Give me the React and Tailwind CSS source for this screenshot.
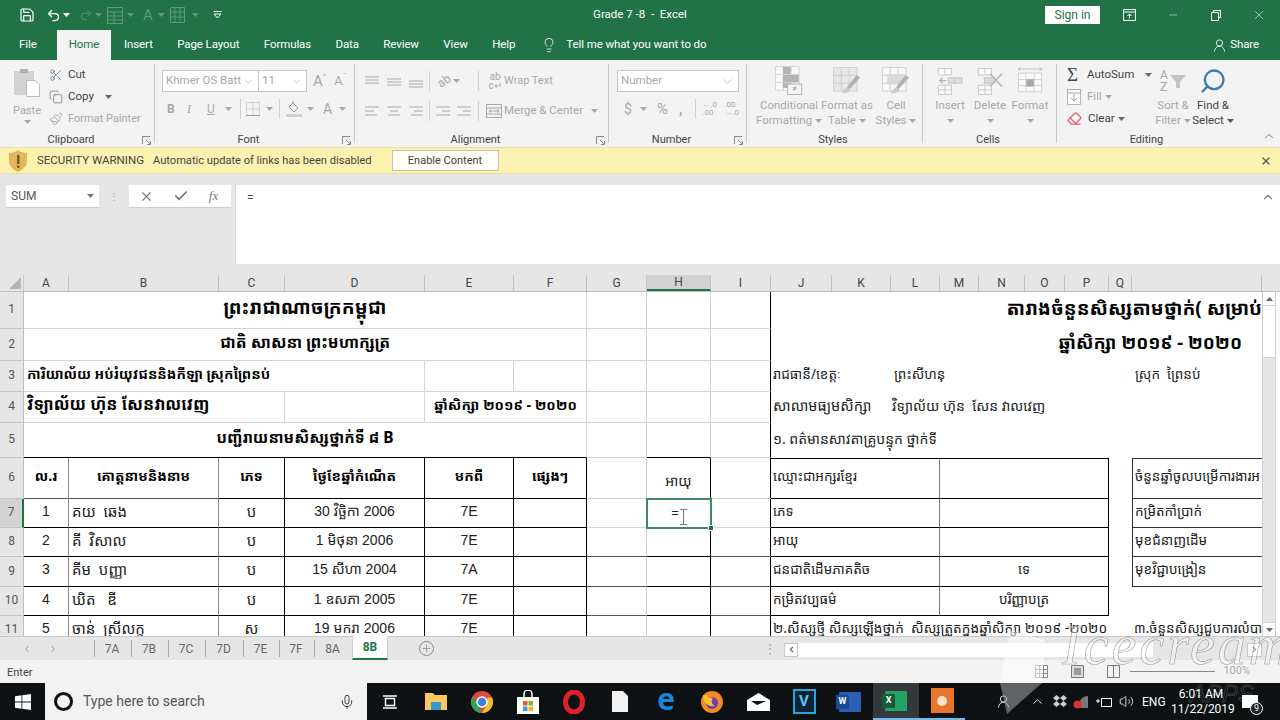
import {
  Save, Undo2, Redo2, Scissors, Copy, Paintbrush, Lightbulb, UserRound, X, Check, Minus, Search,
  Mic, Volume2, ChevronUp, ChevronDown, ChevronLeft, ChevronRight, Plus, Eraser,
} from 'lucide-react'

const uiFont = "font-['Roboto','Open_Sans',sans-serif]"
const khmer = "font-['Noto_Sans_Khmer','Khmer_OS_Battambang','Noto_Sans','Liberation_Sans',sans-serif]"

function Caret({ className = 'text-[#a8a8a8]' }) {
  return (
    <svg width="7" height="4" viewBox="0 0 7 4" className={`shrink-0 ${className}`}>
      <path d="M0 0h7L3.500 4z" fill="currentColor" />
    </svg>
  )
}

// three short lines, used for all the alignment buttons
function Lines({ ys = [2, 6, 10], xs = [[1, 15], [1, 15], [1, 15]] }) {
  return (
    <svg width="16" height="13" viewBox="0 0 16 13" className="text-[#a8a8a8] shrink-0">
      {ys.map((y, i) => (
        <path key={i} d={`M${xs[i][0]} ${y}H${xs[i][1]}`} stroke="currentColor" strokeWidth="1" />
      ))}
    </svg>
  )
}

function Launcher() {
  return (
    <svg width="9" height="9" viewBox="0 0 9 9" className="text-[#8a8a8a] shrink-0">
      <path d="M.5 8V.5H8M8.500 8.500 4 4M8.500 5v3.500H5" fill="none" stroke="currentColor" />
    </svg>
  )
}

function Group({ width, label, launcher, children, last }) {
  return (
    <div className={`${width} h-full flex flex-col shrink-0 pt-[2px] ${last ? '' : 'border-r border-[#c8c8c8]'}`}>
      <div className="flex-1 min-h-0 flex">{children}</div>
      <div className="h-[17px] -mb-[6px] flex items-center pr-[3px]">
        <div className="flex-1 text-center text-[11px] text-[#444]">{label}</div>
        {launcher ? <Launcher /> : null}
      </div>
    </div>
  )
}

function BigButton({ icon, lines, width }) {
  return (
    <div className={`${width} flex flex-col items-center shrink-0 text-[11.5px] leading-[15px] text-[#a8a8a8] text-center`}>
      <div className="h-[30px] flex items-center justify-center opacity-75">{icon}</div>
      <div className="mt-[2px]">{lines[0]}</div>
      <div className="flex items-center gap-[3px] whitespace-nowrap h-[15px]">
        {lines[1]} <Caret />
      </div>
    </div>
  )
}

const gridLines = 'M.5.5h27v27H.5zM.5 9.500h27M.5 18.500h27M9.500.5v27M18.500.5v27'

function CondIcon() {
  return (
    <svg width="28" height="30" viewBox="0 0 32 34">
      <path d={gridLines} fill="#fff" stroke="#c0c0c0" />
      <path d="M9 1h9v8H9zM9 10h18v8H9zM9 19h9v6H9z" fill="#a0a0a0" />
      <rect x="14.500" y="20.500" width="16" height="12" fill="#f5f5f5" stroke="#999" />
      <text x="22.500" y="30" fontSize="10" textAnchor="middle" fill="#666">≠</text>
    </svg>
  )
}

function TableIcon({ shade }) {
  return (
    <svg width="28" height="28" viewBox="0 0 32 32">
      <path d={gridLines} fill={shade ? '#fafafa' : '#e4e4e4'} stroke="#c0c0c0" />
      {shade ? <path d="M6 8h19v12H6z" fill="#d0d0d0" /> : null}
      <path d="M31 12 19 25l-3-2 11-14z" fill="#9a9a9a" />
      <path d="M17 23c-3 1-5 3-7 7 5 0 9-1 10-4z" fill="#bdbdbd" />
    </svg>
  )
}

function CellsIcon({ kind }) {
  if (kind === 'format') {
    return (
      <svg width="26" height="30" viewBox="0 0 28 32">
        <path d="M1 3h26M1 3l3-2M1 3l3 2M27 3l-3-2M27 3l-3 2" stroke="#aaa" fill="none" />
        <path d="M1.500 7.500h25v20h-25zM1.500 14.500h25M1.500 21h25M9.500 7.500v20M18.500 7.500v20" fill="#fff" stroke="#c0c0c0" />
        <path d="M10 14h8v8h-8z" fill="#8f8f8f" />
      </svg>
    )
  }
  return (
    <svg width="26" height="30" viewBox="0 0 28 32">
      <path d="M1.500 2.500h14v7h-14zM8.500 2.500v7M1.500 20.500h14v10h-14zM1.500 25.500h14M8.500 20.500v10" fill="#fff" stroke="#b5b5b5" />
      {kind === 'insert' ? (
        <>
          <path d="M12 12.500h15v6H12zM19 12.500v6" fill="#d8d8d8" stroke="#b5b5b5" />
          <path d="M10 15.500H3M6 12.500l-3 3 3 3" stroke="#999" strokeWidth="1.400" fill="none" />
        </>
      ) : (
        <>
          <path d="M8 12.500h11v6H8z" fill="#cfcfcf" stroke="#b5b5b5" />
          <path d="m14 8 13 14M27 8 14 22" stroke="#a8a8a8" strokeWidth="1.800" />
        </>
      )}
    </svg>
  )
}

function Ribbon() {
  return (
    <div className={`h-[87px] bg-[#f3f3f3] flex py-[4px] shrink-0 ${uiFont}`}>
      <Group width="w-[155px]" label="Clipboard" launcher>
        <div className="w-[46px] flex flex-col items-center text-[11px] text-[#a8a8a8] pl-[8px]">
          <svg width="28" height="32" viewBox="0 0 28 32">
            <path d="M1 5h20v24H1z" fill="#d2d2d2" />
            <path d="M7 3h8v4H7z" fill="#b0b0b0" />
            <path d="M13.500 14.500h9l4 4v12h-13z" fill="#fff" stroke="#bbb" />
          </svg>
          <div className="mt-[5px]">Paste</div>
          <Caret />
        </div>
        <div className="flex flex-col gap-[5px] pl-[3px] text-[11.5px] text-[#444] leading-[17px]">
          <div className="flex items-center gap-[5px]">
            <Scissors size={14} strokeWidth={1.300} className="text-[#4a6f9d]" /> Cut
          </div>
          <div className="flex items-center gap-[5px]">
            <Copy size={14} strokeWidth={1.200} className="text-[#666]" /> Copy
            <Caret className="text-[#666] ml-[6px]" />
          </div>
          <div className="flex items-center gap-[5px] text-[#a8a8a8]">
            <Paintbrush size={14} strokeWidth={1.600} /> <span className="text-[11px]">Format Painter</span>
          </div>
        </div>
      </Group>

      <Group width="w-[200px]" label="Font" launcher>
        <div className="pl-[7px] flex flex-col gap-[6px] text-[#a8a8a8] pt-[4px]">
          <div className="flex items-center h-[22px] text-[11.5px]">
            <div className="w-[97px] h-full bg-white border border-[#c6c6c6] flex items-center justify-between px-[3px]">
              Khmer OS Batt <ChevronDown size={13} strokeWidth={1} />
            </div>
            <div className="w-[48px] h-full bg-white border-y border-r border-[#c6c6c6] flex items-center justify-between px-[3px]">
              11 <ChevronDown size={13} strokeWidth={1} />
            </div>
            <span className="ml-[6px] text-[15px]">A</span>
            <span className="text-[8px] -mt-[9px]">^</span>
            <span className="ml-[8px] text-[13px]">A</span>
            <span className="text-[8px] -mt-[9px]">ˇ</span>
          </div>
          <div className="flex items-center h-[22px] pl-[5px]">
            <span className="w-[20px] text-[12px] font-bold">B</span>
            <span className="w-[20px] text-[12px] italic font-serif">I</span>
            <span className="w-[18px] text-[12px] underline">U</span>
            <Caret />
            <div className="w-px h-[20px] bg-[#d0d0d0] ml-[8px] mr-[5px]" />
            <svg width="14" height="14" viewBox="0 0 14 14" className="mr-[6px]">
              <path d="M.5.5h13v13H.5zM.5 7h13M7 .5v13" fill="none" stroke="#b5b5b5" strokeDasharray="1 1" />
              <path d="M0 13.500h14" stroke="#999" />
            </svg>
            <Caret />
            <div className="w-px h-[20px] bg-[#d0d0d0] ml-[6px] mr-[6px]" />
            <svg width="16" height="16" viewBox="0 0 16 16" className="mr-[5px]">
              <path d="m7 2 5 5-4 4-5-5zM7 2V0" fill="none" stroke="#9a9a9a" />
              <path d="M0 13h16v3H0z" fill="#d0d0d0" />
            </svg>
            <Caret />
            <span className="ml-[9px] mr-[7px] text-[14px]">A</span>
            <Caret />
          </div>
        </div>
      </Group>

      <Group width="w-[254px]" label="Alignment" launcher>
        <div className="pl-[9px] flex flex-col gap-[14px] pt-[7px] text-[11.5px] text-[#a8a8a8]">
          <div className="flex items-center h-[16px]">
            <div className="flex gap-[6px]">
              <Lines ys={[2, 5, 8]} />
              <Lines ys={[4, 7, 10]} />
              <Lines ys={[6, 9, 12]} />
            </div>
            <div className="w-px h-[20px] bg-[#d0d0d0] mx-[5px]" />
            <span className="text-[12px] rotate-[-35deg] w-[18px] text-center">ab</span>
            <Caret />
            <div className="w-px h-[20px] bg-[#d0d0d0] ml-[18px] mr-[8px]" />
            <span className="text-[10px] leading-[9px] w-[16px] text-center">ab c↵</span>
            <span className="ml-[1px] text-[11px]">Wrap Text</span>
          </div>
          <div className="flex items-center h-[16px]">
            <div className="flex gap-[6px]">
              <Lines xs={[[1, 15], [1, 10], [1, 13]]} />
              <Lines xs={[[1, 15], [4, 12], [2, 14]]} />
              <Lines xs={[[1, 15], [6, 15], [3, 15]]} />
            </div>
            <div className="w-px h-[20px] bg-[#d0d0d0] mx-[5px]" />
            <div className="flex gap-[5px]">
              <Lines xs={[[1, 15], [7, 15], [1, 15]]} />
              <Lines xs={[[1, 15], [7, 15], [1, 15]]} />
            </div>
            <div className="w-px h-[20px] bg-[#d0d0d0] ml-[6px] mr-[7px]" />
            <svg width="16" height="16" viewBox="0 0 16 16">
              <path d="M.5 1.500h15v13H.5zM.5 5h15M.5 11h15" fill="none" stroke="#a8a8a8" />
              <path d="M3 8h10M3 8l2-1.500M3 8l2 1.500M13 8l-2-1.500M13 8l-2 1.500" stroke="#a8a8a8" fill="none" />
            </svg>
            <span className="ml-[2px]">Merge &amp; Center</span>
            <Caret className="text-[#a8a8a8] ml-[8px]" />
          </div>
        </div>
      </Group>

      <Group width="w-[138px]" label="Number" launcher>
        <div className="pl-[8px] flex flex-col gap-[6px] pt-[4px] text-[#a8a8a8]">
          <div className="w-[122px] h-[22px] bg-white border border-[#c6c6c6] flex items-center justify-between px-[3px] text-[11.5px]">
            Number <ChevronDown size={15} strokeWidth={1} />
          </div>
          <div className="flex items-center h-[22px] pl-[7px] text-[14px]">
            $ <Caret className="text-[#a8a8a8] ml-[8px]" />
            <span className="ml-[10px] text-[15px]">%</span>
            <span className="ml-[11px] font-bold">,</span>
            <div className="w-px h-[20px] bg-[#d0d0d0] ml-[13px] mr-[6px]" />
            <span className="text-[8px] leading-[8px] w-[16px]">←.0 .00</span>
            <span className="text-[8px] leading-[8px] w-[16px] ml-[6px]">.00 →.0</span>
          </div>
        </div>
      </Group>

      <Group width="w-[176px]" label="Styles">
        <div className="flex pl-[11px]">
          <BigButton width="w-[62px]" icon={<CondIcon />} lines={['Conditional', 'Formatting']} />
          <BigButton width="w-[54px]" icon={<TableIcon />} lines={['Format as', 'Table']} />
          <BigButton width="w-[44px]" icon={<TableIcon shade />} lines={['Cell', 'Styles']} />
        </div>
      </Group>

      <Group width="w-[134px]" label="Cells">
        <div className="flex pl-[7px]">
          <BigButton width="w-[40px]" icon={<CellsIcon kind="insert" />} lines={['Insert', '']} />
          <BigButton width="w-[40px]" icon={<CellsIcon kind="delete" />} lines={['Delete', '']} />
          <BigButton width="w-[40px]" icon={<CellsIcon kind="format" />} lines={['Format', '']} />
        </div>
      </Group>

      <Group width="w-[182px]" label="Editing" last>
        <div className="flex pl-[10px]">
          <div className="w-[86px] flex flex-col gap-[5px] text-[11.5px] leading-[17px] text-[#444]">
            <div className="flex items-center gap-[3px]">
              <span className="text-[19px] leading-[17px] w-[17px] text-[#444] font-['Liberation_Serif',serif]">Σ</span> AutoSum
              <Caret className="text-[#666] ml-[8px]" />
            </div>
            <div className="flex items-center gap-[3px] text-[#a8a8a8]">
              <svg width="14" height="16" viewBox="0 0 14 16" className="mr-[3px]">
                <path d="M.5.5h13v15H.5z" fill="#fff" stroke="#b5b5b5" />
                <path d="M0 0h14v4H0zM7 5v7M4 9l3 3 3-3" fill="none" stroke="#a0a0a0" />
              </svg>
              Fill <Caret />
            </div>
            <div className="flex items-center gap-[3px]">
              <Eraser size={15} strokeWidth={2} className="text-[#e0607a] mr-[3px]" /> Clear <Caret className="text-[#666]" />
            </div>
          </div>
          <div className="w-[40px] flex flex-col items-center text-[11.5px] leading-[15px] text-[#a8a8a8]">
            <div className="h-[30px] flex items-center text-[12px] leading-[12px]">
              <span className="w-[10px]">A Z</span>
              <svg width="16" height="16" viewBox="0 0 16 16">
                <path d="M0 2h16l-6 7v6H6V9z" fill="#c4c4c4" />
              </svg>
            </div>
            <div className="mt-[2px]">Sort &amp;</div>
            <div className="flex items-center gap-[3px]">Filter <Caret /></div>
          </div>
          <div className="w-[40px] flex flex-col items-center text-[11.5px] leading-[15px] text-[#444]">
            <div className="h-[30px] flex items-center">
              <Search size={28} strokeWidth={2} className="text-[#3f79b5] -scale-x-100" />
            </div>
            <div className="mt-[2px] whitespace-nowrap">Find &amp;</div>
            <div className="flex items-center gap-[3px]">Select <Caret className="text-[#555]" /></div>
          </div>
        </div>
      </Group>
      <div className="w-[41px] h-full flex items-end justify-center pl-[18px]">
        <ChevronUp size={14} strokeWidth={1.400} className="text-[#666] shrink-0" />
      </div>
    </div>
  )
}

function TitleBar() {
  return (
    <div className="h-[30px] grid grid-cols-[1fr_auto_1fr] items-center text-white shrink-0 text-[11.5px]">
      <div className="flex items-center pl-[19px]">
        <Save size={16} strokeWidth={1.800} />
        <Undo2 size={15} strokeWidth={2} className="ml-[11px]" />
        <Caret className="text-white ml-[2px]" />
        <Redo2 size={14} strokeWidth={1.500} className="ml-[9px] text-[#5f9a79]" />
        <Caret className="text-[#5f9a79] ml-[2px]" />
        <svg width="16" height="17" viewBox="0 0 16 17" className="ml-[5px] text-[#5f9a79]">
          <path d="M.5.5h15v16H.5zM.5 5h15M.5 9h15M.5 13h15M7 5v12" fill="none" stroke="currentColor" />
        </svg>
        <Caret className="text-[#5f9a79] ml-[4px]" />
        <span className="ml-[9px] text-[#5f9a79] text-[15px] leading-none">A</span>
        <Caret className="text-[#5f9a79] ml-[5px]" />
        <svg width="17" height="16" viewBox="0 0 17 16" className="ml-[5px] text-[#5f9a79]">
          <path d="M.5.5h14v15H.5zM.5 5h14M.5 10h14M5 .5v15M10 .5v15" fill="none" stroke="currentColor" />
        </svg>
        <Caret className="text-[#5f9a79] ml-[5px]" />
        <svg width="9" height="8" viewBox="0 0 9 8" className="ml-[14px]">
          <path d="M.5.5h8M1 3h7L4.500 7z" stroke="#fff" fill="none" />
        </svg>
      </div>
      <div className="whitespace-pre">Grade 7 -8  -  Excel</div>
      <div className="flex items-center justify-end">
        <div className="w-[55px] h-[18px] bg-white text-[#217346] text-[12px] flex items-center justify-center">Sign in</div>
        <svg width="13" height="12" viewBox="0 0 13 12" className="ml-[23px]">
          <path d="M.5.5h12v11H.5zM.5 3h12M6.500 9.500V5M4.500 7l2-2 2 2" fill="none" stroke="#fff" />
        </svg>
        <Minus size={12} strokeWidth={1} className="ml-[31px]" />
        <svg width="10" height="11" viewBox="0 0 10 11" className="ml-[32px]">
          <path d="M2.500 2.500v-2h7v7h-2M.5 2.500h7v8h-7z" fill="none" stroke="#fff" />
        </svg>
        <X size={14} strokeWidth={1} className="ml-[31px] mr-[14px]" />
      </div>
    </div>
  )
}

function TabRow() {
  const tabs = ['Insert', 'Page Layout', 'Formulas', 'Data', 'Review', 'View', 'Help']
  return (
    <div className="h-[30px] flex items-end text-white text-[11.5px] tracking-[-0.1px] shrink-0">
      <div className="pl-[19px] h-full flex items-center w-[57px]">File</div>
      <div className="w-[54px] h-full bg-[#f3f3f3] text-[#217346] flex items-center justify-center">Home</div>
      <div className="flex items-center gap-[24.400px] h-full pl-[13px]">
        {tabs.map((t) => (
          <span key={t}>{t}</span>
        ))}
      </div>
      <div className="flex items-center h-full ml-[26px]">
        <Lightbulb size={16} strokeWidth={1.200} />
        <span className="ml-[9px]">Tell me what you want to do</span>
      </div>
      <div className="flex-1" />
      <div className="flex items-center h-full pr-[21px] gap-[3px]">
        <UserRound size={15} strokeWidth={1.300} /> Share
      </div>
    </div>
  )
}

function FormulaBar() {
  return (
    <div className={`h-[101px] bg-[#e6e6e6] flex pt-[11px] shrink-0 ${uiFont}`}>
      <div className="w-[93px] h-[23px] ml-[6px] bg-white border-b border-[#d0d0d0] flex items-center justify-between px-[5px] text-[12px] text-[#555]">
        SUM <Caret className="text-[#777]" />
      </div>
      <div className="w-[30px] text-center text-[#aaa] text-[10px] leading-[23px]">⋮</div>
      <div className="w-[102px] h-[23px] bg-white border-b border-[#d0d0d0] flex items-center justify-around pr-[3px] text-[#777]">
        <X size={15} strokeWidth={1.800} />
        <Check size={16} strokeWidth={2.600} />
        <span className="text-[13px] italic font-['Liberation_Serif',serif]">fx</span>
      </div>
      <div className="flex-1 h-[79px] ml-[4px] bg-white border-l border-[#d8d8d8] flex items-start justify-between pl-[11px] pr-[5px] pt-[4px] text-[12px] text-[#444]">
        =
        <ChevronUp size={14} strokeWidth={2.400} className="text-[#888] mt-[1px]" />
      </div>
    </div>
  )
}

const colLetters = [
  ['A', 'w-[45px]'], ['B', 'w-[150px]'], ['C', 'w-[66px]'], ['D', 'w-[140px]'], ['E', 'w-[89px]'], ['F', 'w-[73px]'],
  ['G', 'w-[60px]'], ['H', 'w-[64px]'], ['I', 'w-[60px]'], ['J', 'w-[61px]'], ['K', 'w-[59px]'], ['L', 'w-[49px]'],
  ['M', 'w-[39px]'], ['N', 'w-[46px]'], ['O', 'w-[40px]'], ['P', 'w-[44px]'], ['Q', 'w-[23px]'], ['', 'w-[130px]'],
]

function ColHeaders() {
  return (
    <div className={`h-[17px] flex bg-[#e6e6e6] border-b border-[#bdbdbd] shrink-0 text-[12px] text-[#444] ${uiFont}`}>
      <div className="w-[24px] flex items-end justify-end pr-[2px] pb-[2px] border-r border-[#c8c8c8]">
        <svg width="12" height="12" viewBox="0 0 12 12"><path d="M12 0v12H0z" fill="#b5b5b5" /></svg>
      </div>
      {colLetters.map(([l, w]) => (
        <div
          key={l + w}
          className={`${w} shrink-0 flex items-center justify-center border-r border-[#c4c4c4] ${l === 'H' ? 'bg-[#d2d2d2] border-b-2 border-b-[#217346]' : ''}`}
        >
          {l}
        </div>
      ))}
    </div>
  )
}

const rowHeights = ['h-[37px]', 'h-[32px]', 'h-[31px]', 'h-[31px]', 'h-[35px]', 'h-[41px]', 'h-[29px]', 'h-[29px]', 'h-[30px]', 'h-[29px]', 'h-[29px]']

function RowHeaders() {
  return (
    <div className={`w-[24px] shrink-0 bg-[#e6e6e6] text-[12px] text-[#555] ${uiFont}`}>
      {rowHeights.map((h, i) => (
        <div
          key={h + i}
          className={`${h} flex items-center justify-center pb-[2px] border-b border-[#c4c4c4] border-r ${i === 6 ? 'bg-[#d2d2d2] border-r-2 border-r-[#217346]' : 'border-r-[#bdbdbd]'}`}
        >
          {i + 1}
        </div>
      ))}
    </div>
  )
}

const L = 'border-r border-b border-[#d4d4d4]'
const LJ = 'border-r border-b border-[#d4d4d4] border-r-black'
const K = 'border-r border-b border-black'
const G = 'border-r border-b border-[#8a8a8a] border-b-black'
const N = ''
const BoxL = 'border-r border-b border-t border-black border-r-[#777]'
const BoxK = 'border-r border-b border-t border-black'

const moul = `${khmer} font-bold text-[14px] text-black whitespace-pre overflow-hidden pb-[5px]`
const body = `${khmer} text-[13.5px] text-[#222] whitespace-pre overflow-hidden pb-[4px]`
const num = "font-['Liberation_Sans','Noto_Sans_Khmer',sans-serif] text-[14px] text-[#222] whitespace-nowrap pb-[4px]"

function Cell({ span, b = L, c = '', children }) {
  return <div className={`${span || ''} ${b} ${c} min-w-0 flex items-center`}>{children}</div>
}

const students = [
  ['1', 'គយ  ឆេង', 'ប', '30 វិច្ឆិកា 2006', '7E'],
  ['2', 'គី  វិសាល', 'ប', '1 មិថុនា 2006', '7E'],
  ['3', 'គីម  បញ្ញា', 'ប', '15 សីហា 2004', '7A'],
  ['4', 'ឃិត   ឌី', 'ប', '1 ឧសភា 2005', '7E'],
  ['5', 'ចាន់  ស្រីលក្ខ', 'ស', '19 មករា 2006', '7E'],
]

const sideRows = [
  ['ភេទ', '', 'កម្រិតកាំប្រាក់'],
  ['អាយុ', '', 'មុខជំនាញដើម'],
  ['ជនជាតិដើមភាគតិច', 'ទេ', 'មុខវិជ្ជាបង្រៀន'],
  ['កម្រិតវប្បធម៌', 'បរិញ្ញាបត្រ', ''],
]

function Sheet() {
  return (
    <div className="grid grid-cols-[45px_150px_66px_140px_89px_73px_60px_64px_60px_61px_59px_49px_39px_46px_40px_44px_23px_130px] grid-rows-[37px_32px_31px_31px_35px_41px_29px_29px_30px_29px_29px] w-[1238px] bg-white">
      {/* row 1 */}
      <Cell span="col-span-6" c={`${moul} justify-center text-[19px]`}>ព្រះរាជាណាចក្រកម្ពុជា</Cell>
      <Cell /><Cell /><Cell b={LJ} />
      <Cell span="col-span-9" b={N} c={`${moul} justify-end text-[19px]`}>តារាងចំនួនសិស្សតាមថ្នាក់( សម្រាប់</Cell>
      {/* row 2 */}
      <Cell span="col-span-6" c={`${moul} justify-center text-[16px]`}>ជាតិ សាសនា ព្រះមហាក្សត្រ</Cell>
      <Cell /><Cell /><Cell b={LJ} />
      <Cell span="col-span-9" b={N} c={`${moul} justify-end pr-[20px] text-[18px]`}>ឆ្នាំសិក្សា ២០១៩ - ២០២០</Cell>
      {/* row 3 */}
      <Cell span="col-span-4" c={`${moul} pl-[3px] text-[14.3px]`}>ការិយាល័យ អប់រំយុវជននិងកីឡា ស្រុកព្រៃនប់</Cell>
      <Cell /><Cell /><Cell /><Cell /><Cell b={LJ} />
      <Cell span="col-span-2" b={N} c={`${body} pl-[2px]`}>រាជធានី/ខេត្តៈ</Cell>
      <Cell span="col-span-6" b={N} c={`${body} pl-[3px]`}>ព្រះសីហនុ</Cell>
      <Cell b={N} c={`${body} pl-[3px]`}>ស្រុក  ព្រៃនប់</Cell>
      {/* row 4 */}
      <Cell span="col-span-3" c={`${moul} pl-[3px] text-[16.500px]`}>វិទ្យាល័យ ហ៊ុន សែនវាលវេញ</Cell>
      <Cell />
      <Cell span="col-span-2" c={`${moul} justify-center text-[14.7px]`}>ឆ្នាំសិក្សា ២០១៩ - ២០២០</Cell>
      <Cell /><Cell /><Cell b={LJ} />
      <Cell span="col-span-2" b={N} c={`${body} pl-[2px] text-[14.5px]`}>សាលាមធ្យមសិក្សា</Cell>
      <Cell span="col-span-7" b={N} c={`${body} pl-[1px] text-[14px]`}>វិទ្យាល័យ ហ៊ុន  សែន វាលវេញ</Cell>
      {/* row 5 */}
      <Cell span="col-span-6" b="border-r border-b border-[#d4d4d4] border-b-black" c={`${moul} justify-center text-[15.500px]`}>បញ្ជីរាយនាមសិស្សថ្នាក់ទី ៨ B</Cell>
      <Cell /><Cell b="border-r border-b border-[#d4d4d4] border-b-black" /><Cell b={LJ} />
      <Cell span="col-span-9" b={N} c={`${body} pl-[2px] text-[14px]`}>១. ពត៌មានសាវតាគ្រូបន្ទុក ថ្នាក់ទី</Cell>
      {/* row 6 */}
      {['ល.រ', 'គោត្តនាមនិងនាម', 'ភេទ', 'ថ្ងៃខែឆ្នាំកំណើត', 'មកពី', 'ផ្សេងៗ'].map((t, i) => (
        <Cell key={t} b={i < 2 ? 'border-r border-b border-[#8a8a8a] border-b-[#555]' : K} c={`${moul} justify-center`}>{t}</Cell>
      ))}
      <Cell />
      <Cell b={K} c={`${body} justify-center text-[14px] pt-[8px]`}>អាយុ</Cell>
      <Cell b={LJ} />
      <Cell span="col-span-3" b={BoxL} c={`${body} pl-[2px]`}>ឈ្មោះជាអក្សរខ្មែរ</Cell>
      <Cell span="col-span-4" b={BoxK} />
      <Cell b={N} />
      <Cell b="border-l border-b border-t border-[#333]" c={`${body} pl-[2px]`}>ចំនួនឆ្នាំចូលបម្រើការងារអ</Cell>
      {/* rows 7 to 11 */}
      {students.map((s, i) => (
        <StudentRow key={s[0]} s={s} i={i} />
      ))}
    </div>
  )
}

function StudentRow({ s, i }) {
  const side = sideRows[i]
  const dark = i >= 1 && i <= 3
  const gapCell = dark ? 'border-r border-b border-[#d4d4d4] border-b-[#555]' : L
  const gapCellJ = dark ? 'border-r border-b border-r-black border-b-[#555]' : LJ
  return (
    <>
      <Cell b={G} c={`${num} justify-center text-[12.500px]`}>{s[0]}</Cell>
      <Cell b={G} c={`${body} pl-[3px] text-[15px]`}>{s[1]}</Cell>
      <Cell b={K} c={`${body} justify-center text-[15px]`}>{s[2]}</Cell>
      <Cell b={K} c={`${num} justify-center`}>{s[3]}</Cell>
      <Cell b={K} c={`${num} justify-center`}>{s[4]}</Cell>
      <Cell b={K} />
      <Cell b={gapCell} />
      {i === 0 ? (
        <div className="relative border-2 border-[#3f8a63] flex items-center justify-center text-[13px] text-[#222] z-10 -ml-px -mt-px w-[66px] h-[31px]">
          <span className="font-['Liberation_Sans',sans-serif] -mt-[2px] pr-[1px]">=</span>
          <svg width="7" height="16" viewBox="0 0 7 16" className="mt-[7px]">
            <path d="M0 .5h7M3.500.5v15M0 15.500h7" stroke="#777" fill="none" />
          </svg>
          <div className="absolute -right-[4px] -bottom-[4px] w-[6px] h-[6px] bg-[#217346] border border-white" />
        </div>
      ) : (
        <Cell b={K} />
      )}
      <Cell b={gapCellJ} />
      {side ? (
        <>
          <Cell span="col-span-3" b="border-r border-b border-black border-r-[#777]" c={`${body} pl-[2px]`}>{side[0]}</Cell>
          <Cell span="col-span-4" b={K} c={`${body} justify-center`}>{side[1]}</Cell>
          <Cell b={N} />
          {side[2] ? (
            <Cell b="border-l border-b border-[#333]" c={`${body} pl-[2px]`}>{side[2]}</Cell>
          ) : (
            <Cell b={N} />
          )}
        </>
      ) : (
        <>
          <Cell span="col-span-8" b={N} c={`${body} pl-[2px] text-[13.700px]`}>២.សិស្សថ្មី សិស្សឡើងថ្នាក់  សិស្សត្រួតក្នុងឆ្នាំសិក្សា ២០១៩ -២០២០</Cell>
          <Cell b={N} c={`${body} pl-[2px]`}>៣.ចំនួនសិស្សជួបការលំបាក</Cell>
        </>
      )}
    </>
  )
}

function VScroll() {
  return (
    <div className="w-[18px] shrink-0 flex">
      <div className="w-[14px] bg-[#e6e6e6] border-x border-[#cfcfcf] flex flex-col">
        <div className="h-[14px] bg-white flex items-center justify-center border-b border-[#cfcfcf]">
          <svg width="7" height="4" viewBox="0 0 7 4"><path d="M0 4h7L3.500 0z" fill="#666" /></svg>
        </div>
        <div className="h-[52px] bg-white border-b border-[#cfcfcf]" />
        <div className="flex-1" />
        <div className="h-[14px] bg-white flex items-center justify-center border-t border-[#cfcfcf]">
          <Caret className="text-[#666]" />
        </div>
      </div>
      <div className="flex-1 bg-white" />
    </div>
  )
}

function SheetTabs() {
  const sheets = ['7A', '7B', '7C', '7D', '7E', '7F', '8A']
  const widths = ['w-[37px]', 'w-[37px]', 'w-[37px]', 'w-[38px]', 'w-[36px]', 'w-[35px]', 'w-[38px]']
  return (
    <div className={`h-[24px] bg-[#e6e6e6] flex items-stretch border-t border-[#c8c8c8] shrink-0 text-[12px] text-[#666] ${uiFont}`}>
      <div className="w-[94px] flex items-center gap-[16px] pl-[22px] text-[#bbb]">
        <ChevronLeft size={10} strokeWidth={3} />
        <ChevronRight size={10} strokeWidth={3} />
      </div>
      {sheets.map((s, i) => (
        <div key={s} className={`${widths[i]} flex items-center justify-center my-[3px] pr-[2px] border-l border-[#aaa]`}>{s}</div>
      ))}
      <div className="w-[36px] bg-white -mt-px border-x border-[#d0d0d0] border-b-2 border-b-[#217346] text-[#217346] font-bold flex items-center justify-center">8B</div>
      <div className="w-[76px] flex items-center justify-center">
        <div className="w-[15px] h-[15px] rounded-full border border-[#888] flex items-center justify-center">
          <Plus size={11} strokeWidth={1.600} className="text-[#888]" />
        </div>
      </div>
      <div className="w-[320px] flex items-center pl-[300px] text-[#aaa]">⋮</div>
      <div className="flex items-center h-full pt-[2px]">
        <div className="w-[14px] h-[14px] bg-white border border-[#c8c8c8] flex items-center justify-center">
          <ChevronLeft size={9} strokeWidth={3} className="text-[#666]" />
        </div>
        <div className="w-[355px] h-[14px] bg-white" />
        <div className="w-[94px] h-[14px] bg-[#e6e6e6]" />
        <div className="w-[15px] h-[14px] bg-white border border-[#c8c8c8] flex items-center justify-center">
          <ChevronRight size={9} strokeWidth={3} className="text-[#666]" />
        </div>
      </div>
    </div>
  )
}

function StatusBar() {
  return (
    <div className={`h-[23px] bg-[#f3f3f3] flex items-center pl-[7px] pr-[30px] text-[11px] text-[#444] shrink-0 ${uiFont}`}>
      <span className="pt-[3px]">Enter</span>
      <div className="flex-1" />
      <svg width="13" height="13" viewBox="0 0 13 13" className="mr-[23px]">
        <path d="M.5.5h12v12H.5zM.5 4.500h12M.5 8.500h12M4.500.5v12M8.500.5v12" fill="none" stroke="#888" />
      </svg>
      <svg width="13" height="13" viewBox="0 0 13 13" className="mr-[23px]">
        <path d="M.5.5h12v12H.5z" fill="#ddd" stroke="#777" />
        <path d="M3 3h7v7H3z" fill="#999" />
      </svg>
      <svg width="13" height="13" viewBox="0 0 13 13" className="mr-[10px]">
        <path d="M.5.5h12v12H.5zM6.500.5v12" fill="none" stroke="#777" />
      </svg>
      <div className="w-[85px] h-px bg-[#888]" />
      <span className="ml-[8px] text-[#aaa]">100%</span>
    </div>
  )
}

function TaskIcon({ children, active, open }) {
  return (
    <div className={`w-[46px] h-full flex items-center justify-center shrink-0 ${active ? 'bg-[#33383c]' : ''} ${open || active ? 'border-b-2 border-[#76b9ed]' : ''}`}>
      {children}
    </div>
  )
}

function Taskbar() {
  return (
    <div className="h-[37px] bg-[#0d1114] flex items-center text-white shrink-0 font-['Roboto',sans-serif]">
      <div className="w-[45px] flex justify-center">
        <svg width="16" height="16" viewBox="0 0 16 16" fill="#fff">
          <path d="M0 2.200 6.500 1.300v6.300H0zM7.300 1.200 16 0v7.600H7.300zM0 8.400h6.500v6.300L0 13.800zM7.300 8.400H16V16l-8.700-1.200z" />
        </svg>
      </div>
      <div className="w-[322px] h-full bg-[#f2f2f2] flex items-center pl-[9px] pr-[12px] text-[14px] text-[#555]">
        <div className="w-[19px] h-[19px] rounded-full border-[3px] border-[#111]" />
        <span className="ml-[10px]">Type here to search</span>
        <div className="flex-1" />
        <Mic size={16} strokeWidth={1.300} className="text-[#222]" />
      </div>
      <div className="flex items-center h-full">
        <TaskIcon>
          <svg width="16" height="16" viewBox="0 0 16 16" fill="none" stroke="#fff">
            <path d="M3.500 4.500h9v7h-9zM1 2h14M1 14h14" strokeWidth="1.400" />
          </svg>
        </TaskIcon>
        <TaskIcon>
          <svg width="22" height="19" viewBox="0 0 22 19">
            <path d="M0 1h8l2 2h12v15H0z" fill="#f5c95e" />
            <path d="M6 10h10v8H6z" fill="#3a96c9" />
          </svg>
        </TaskIcon>
        <TaskIcon>
          <svg width="22" height="22" viewBox="0 0 22 22">
            <circle cx="11" cy="11" r="11" fill="#dd4b3e" />
            <path d="M11 22a11 11 0 0 1-9.500-16.500L7 13l4 9z" fill="#2fa557" />
            <path d="M21 6.500A11 11 0 0 1 11 22l4.500-8 1-7.500z" fill="#f6c02c" />
            <circle cx="11" cy="11" r="5" fill="#3f7fe0" stroke="#fff" strokeWidth="1.500" />
          </svg>
        </TaskIcon>
        <TaskIcon>
          <svg width="22" height="24" viewBox="0 0 22 24">
            <path d="M7 7V4a4 4 0 0 1 8 0v3" fill="none" stroke="#fff" strokeWidth="1.500" />
            <path d="M0 7h22v17H0z" fill="#fff" />
            <path d="M6 11h4.500v4.500H6z" fill="#e8562a" /><path d="M11.500 11H16v4.500h-4.500z" fill="#7eb92d" />
            <path d="M6 16.500h4.500V21H6z" fill="#2e9fe0" /><path d="M11.500 16.500H16V21h-4.500z" fill="#f5b91c" />
          </svg>
        </TaskIcon>
        <TaskIcon>
          <svg width="22" height="24" viewBox="0 0 22 24">
            <ellipse cx="11" cy="12" rx="8.500" ry="10" fill="none" stroke="#e0212d" strokeWidth="5" />
          </svg>
        </TaskIcon>
        <TaskIcon>
          <svg width="16" height="21" viewBox="0 0 16 21"><path d="M0 0h11l5 5v16H0z" fill="#f2f2f2" /></svg>
        </TaskIcon>
        <TaskIcon>
          <span className="text-[#1b85d8] text-[30px] font-bold leading-none font-['Open_Sans',sans-serif] -mt-[6px]">e</span>
        </TaskIcon>
        <TaskIcon>
          <svg width="22" height="22" viewBox="0 0 22 22">
            <circle cx="11" cy="11" r="11" fill="#f38a24" />
            <circle cx="11" cy="12" r="6" fill="#6f3fb0" />
            <path d="M2 4c0 8 5 12 12 11-4-2-4-6-2-8-3 0-6-1-7-3z" fill="#f7c035" />
          </svg>
        </TaskIcon>
        <TaskIcon>
          <svg width="23" height="18" viewBox="0 0 23 18">
            <path d="M0 7 11.500 0 23 7v11H0z" fill="#fff" />
            <path d="M4 8h15l-9 4z" fill="#0d1114" />
          </svg>
        </TaskIcon>
        <TaskIcon>
          <div className="w-[23px] h-[25px] bg-[#0c2333] border-2 border-[#2aa3dc] text-[#5cc4f0] text-[15px] font-bold flex items-center justify-center leading-none">V</div>
        </TaskIcon>
        <TaskIcon>
          <div className="relative w-[22px] h-[20px] bg-[#2b5fb4] rounded-[1px]">
            <span className="absolute -left-[3px] top-[3px] w-[13px] h-[14px] bg-[#1a4a94] text-[9px] font-bold flex items-center justify-center leading-none">W</span>
          </div>
        </TaskIcon>
        <TaskIcon active>
          <div className="relative w-[22px] h-[20px] bg-[#21a366] rounded-[1px]">
            <span className="absolute -left-[3px] top-[3px] w-[13px] h-[14px] bg-[#185c37] text-[9px] font-bold flex items-center justify-center leading-none">X</span>
          </div>
        </TaskIcon>
        <TaskIcon open>
          <div className="w-[23px] h-[25px] bg-[#e8752a] flex items-center justify-center">
            <div className="w-[10px] h-[10px] rounded-full bg-[#fde3cc]" />
          </div>
        </TaskIcon>
      </div>
      <div className="flex-1" />
      <div className="flex items-center h-full text-[12px]">
        <UserRound size={15} strokeWidth={1.400} className="mr-[19px]" />
        <ChevronUp size={15} strokeWidth={1.400} className="mr-[8px]" />
        <svg width="14" height="13" viewBox="0 0 14 13" fill="#cfcfcf" className="mr-[6px]">
          <path d="M0 3 3.500 0 7 3 3.500 6zM7 3l3.500-3L14 3l-3.500 3zM0 9l3.500-3L7 9l-3.500 3zM7 9l3.500-3L14 9l-3.500 3z" />
        </svg>
        <svg width="16" height="14" viewBox="0 0 16 14" className="mr-[7px]">
          <path d="M6 9a9 9 0 0 1 9-8v12H6z" fill="#777" />
          <circle cx="4.500" cy="9.500" r="4" fill="#d6322f" />
        </svg>
        <svg width="17" height="12" viewBox="0 0 17 12" fill="none" stroke="#fff" className="mr-[6px]">
          <path d="M5.500 2.500h10v8h-10zM0 5h4M2 3v4" />
        </svg>
        <Volume2 size={15} strokeWidth={1.300} className="mr-[8px]" />
        <span className="w-[24px] mr-[5px]">ENG</span>
        <div className="w-[60px] text-center leading-[15px] mr-[11px] whitespace-nowrap">
          <div>6:01 AM</div>
          <div>11/22/2019</div>
        </div>
        <div className="relative w-[16px] h-[13px] bg-white mr-[22px]">
          <span className="absolute -right-[5px] top-[7px] w-[13px] h-[13px] rounded-full bg-[#222] border border-white text-[9px] flex items-center justify-center leading-none">9</span>
        </div>
      </div>
    </div>
  )
}

function Watermark() {
  return (
    <div className="absolute left-[920px] top-[620px] w-[360px] h-[100px] overflow-hidden pointer-events-none">
      <svg width="130" height="100" viewBox="0 0 130 100" className="absolute left-0 top-0">
        <path d="M90 10 125 20 122 63H80z" fill="#fff" opacity="0.5" />
        <path d="M80 63h42L87 94z" fill="#9a9a9a" opacity="0.6" />
      </svg>
      <div className="absolute left-[142px] -top-[3px] text-[56px] leading-none italic whitespace-nowrap text-white/40 font-['Liberation_Serif',serif] tracking-[3px] [-webkit-text-stroke:0.6px_rgba(120,120,120,0.7)]">
        Icecream
      </div>
      <div className="absolute left-[270px] top-[62px] text-[24px] leading-none italic text-transparent font-['Liberation_Sans',sans-serif] [-webkit-text-stroke:0.5px_rgba(255,255,255,0.3)]">
        APPS
      </div>
    </div>
  )
}

export default function App() {
  return (
    <div className={`relative w-[1280px] h-[720px] overflow-hidden flex flex-col bg-[#217346] ${uiFont}`}>
      <TitleBar />
      <TabRow />
      <Ribbon />
      <div className="h-[27px] bg-[#fdf3b0] border-y border-[#e6e0a8] flex items-center pl-[9px] pr-[8px] text-[11.5px] text-[#444] shrink-0">
        <svg width="18" height="22" viewBox="0 0 18 22">
          <path d="M9 0c2 2 6 3 9 3v8c0 6-5 9-9 11-4-2-9-5-9-11V3c3 0 7-1 9-3z" fill="#e3b65c" />
          <path d="M8 5h2.500v9H8zM8 15.500h2.500V18H8z" fill="#7a5a1f" />
        </svg>
        <span className="ml-[10px] pt-[1px]">SECURITY WARNING</span>
        <span className="ml-[9px] pt-[1px] text-[11.100px]">Automatic update of links has been disabled</span>
        <div className="ml-[20px] w-[107px] h-[21px] pt-[1px] bg-[#fffdf5] border border-[#c9c4a5] flex items-center justify-center text-[11px]">Enable Content</div>
        <div className="flex-1" />
        <X size={12} strokeWidth={2.400} className="text-[#555]" />
      </div>
      <FormulaBar />
      <ColHeaders />
      <div className="h-[344px] flex overflow-hidden shrink-0 bg-white">
        <RowHeaders />
        <Sheet />
        <VScroll />
      </div>
      <SheetTabs />
      <StatusBar />
      <Taskbar />
      <Watermark />
    </div>
  )
}
